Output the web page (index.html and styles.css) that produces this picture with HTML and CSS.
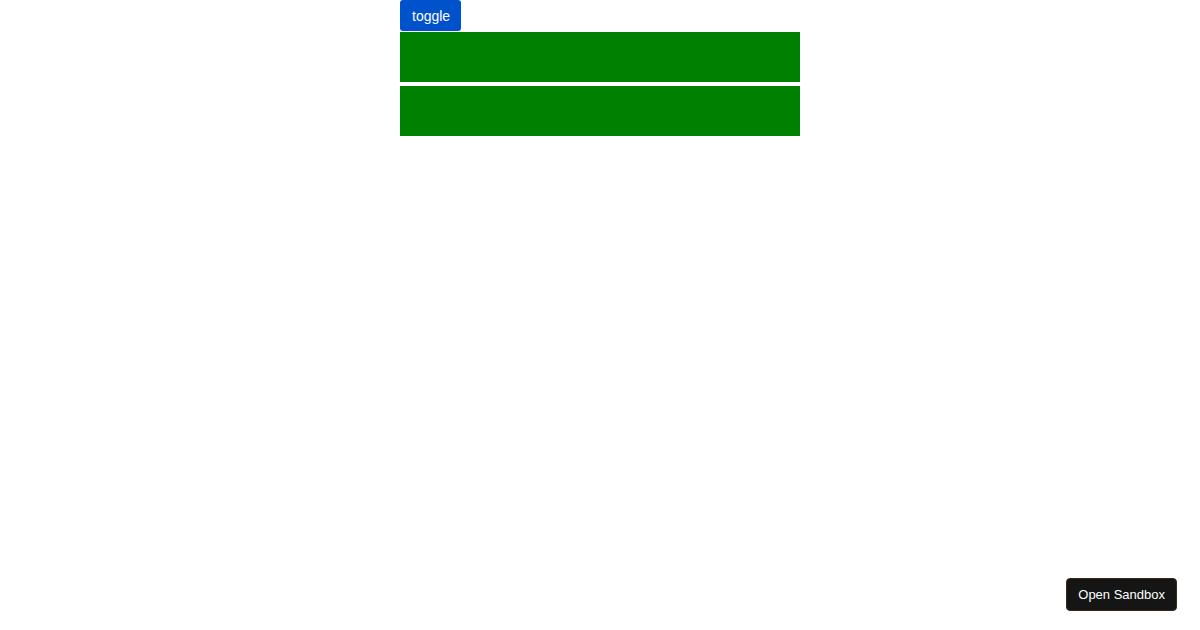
FILE: index.html
```html
<!DOCTYPE html>
<html>
<head>
<meta charset="utf-8">
<link rel="stylesheet" href="styles.css">
</head>
<body>
<div class="wrap">
  <button class="toggle">toggle</button>
  <div class="list">
    <div class="box"></div>
    <div class="box"></div>
  </div>
</div>
<a class="sandbox">Open Sandbox</a>
</body>
</html>
```
FILE: styles.css
```css
html, body { margin: 0; padding: 0; background: #fff; }
body { font-family: "Liberation Sans", Arial, sans-serif; }
.wrap { width: 400px; margin: 0 auto; display: flex; flex-direction: column; align-items: flex-start; }
.toggle {
  background: #0052cc; color: #fff; border: none; border-radius: 3px;
  font-family: "Liberation Sans", Arial, sans-serif; font-size: 14px;
  height: 31px; padding: 0 11px 0 12px; margin: 0 0 1px 0; cursor: pointer;
}
.list { display: flex; flex-direction: column; gap: 4px; width: 400px; }
.box { height: 50px; background: #008000; }
.sandbox {
  position: fixed; right: 23px; bottom: 19px;
  background: #151515; color: #fff; border: 1px solid #3a2a1a; border-radius: 4px;
  font-size: 13px; padding: 0 11px; display: flex; align-items: center;
  box-sizing: border-box; height: 33px;
}
```
